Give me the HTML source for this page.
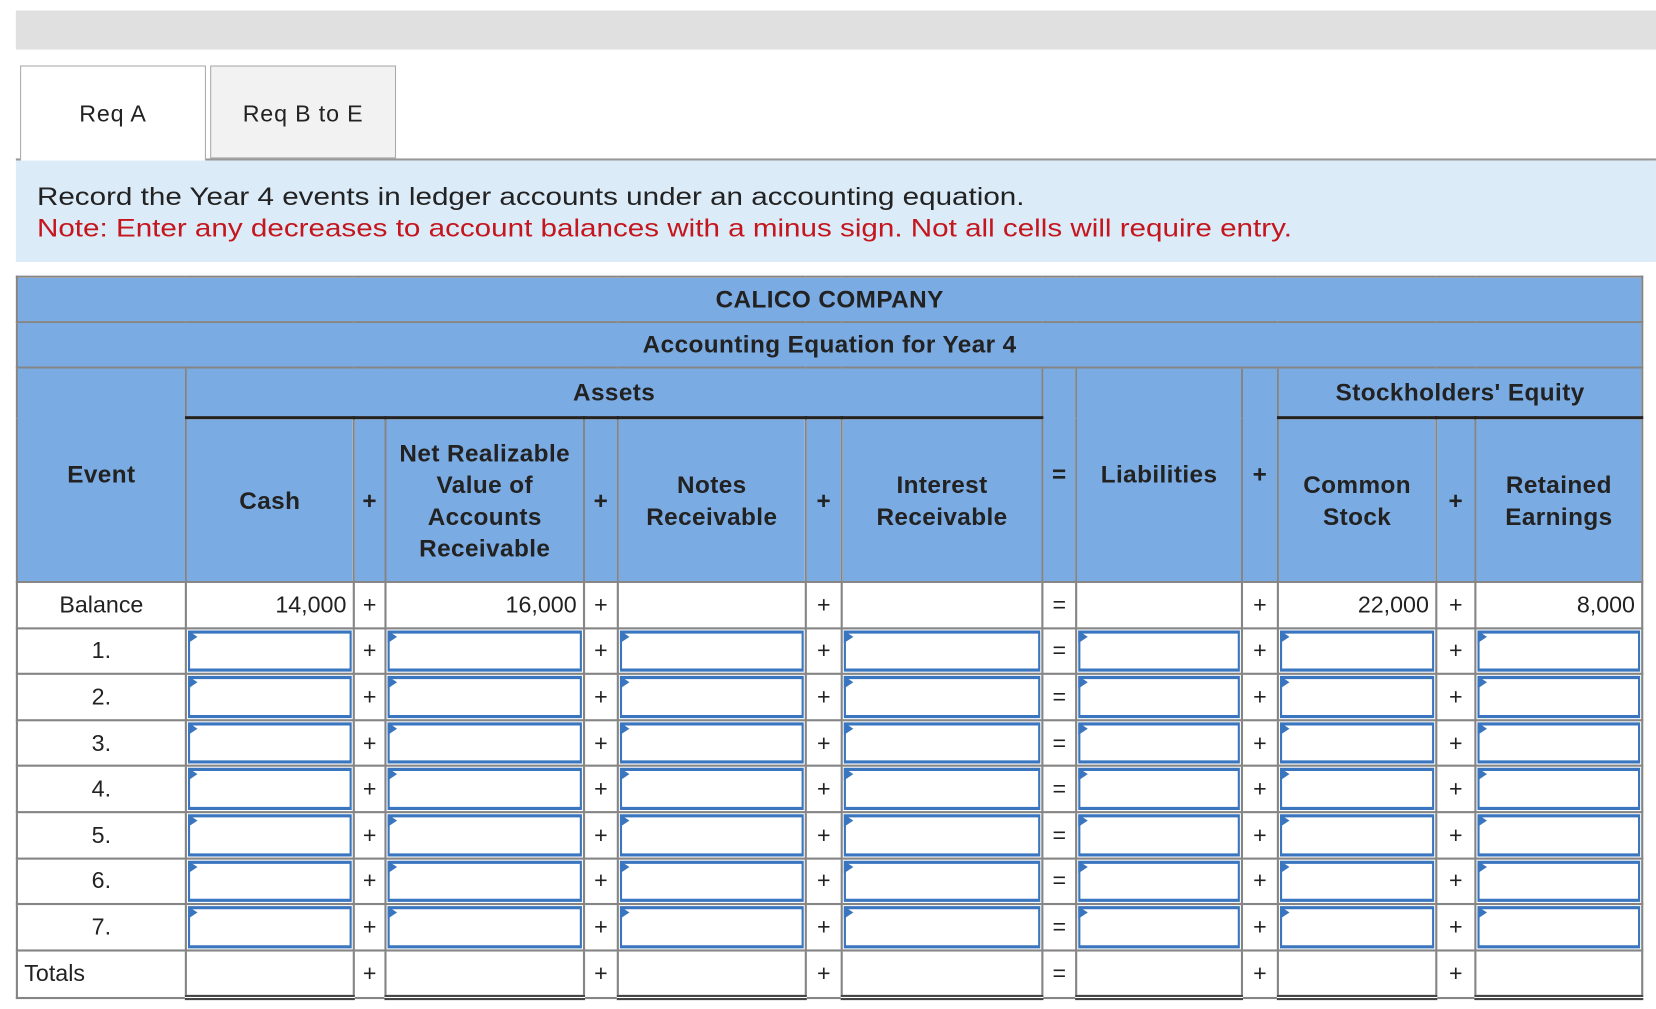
<!DOCTYPE html>
<html><head><meta charset="utf-8"><style>
html,body{margin:0;padding:0;background:#fff;overflow:hidden;width:1656px;height:1008px}
#w{position:absolute;left:0;top:0;width:1568px;height:955px;transform:scale(1.0561);transform-origin:0 0;font-family:"Liberation Sans",Arial,sans-serif;color:#222}
.bar{position:absolute;left:15px;top:10px;width:1553px;height:37px;background:#e0e0e0}
.tab{position:absolute;top:62px;height:88px;box-sizing:border-box;border:1px solid #aaa;font-size:22px;text-align:center;line-height:90px;letter-spacing:0.8px}
.line{position:absolute;left:15px;top:150px;width:1553px;height:2px;background:#999}
.info{position:absolute;left:15px;top:152px;width:1553px;height:96px;background:#dcebf8;font-size:24px}
.info div{position:absolute;left:20px;white-space:nowrap;transform-origin:0 0;transform:scaleX(1.168)}
table{position:absolute;left:15px;top:261px;border-collapse:collapse;table-layout:fixed;width:1539px}
td{border:2px solid #858585;padding:0;font-size:22px;text-align:center;position:relative}
.h td{background:#7aabe2;font-weight:bold;color:#222;letter-spacing:0.4px;font-size:23px}
.r td{height:41.6px}
.num{text-align:right;padding-right:6px}
.in{position:absolute;left:1px;right:1px;top:1px;bottom:1px;border:2px solid #3a76bf;border-top-width:3px;border-bottom-width:3px}
.in:before{content:"";position:absolute;left:-2px;top:-3px;border-left:9px solid #3a76bf;border-top:6px solid transparent;border-bottom:6px solid transparent}
.tot td.v{border-bottom:5px double #444}
</style></head><body><div id="w">
<div class="bar"></div>
<div class="tab" style="left:19px;width:176px;background:#fff;border-bottom:none;height:90px;z-index:2">Req A</div>
<div class="tab" style="left:199px;width:176px;background:#f2f2f2">Req B to E</div>
<div class="line"></div>
<div class="info"><div style="top:21px">Record the Year 4 events in ledger accounts under an accounting equation.</div><div style="top:51px;color:#c4161c">Note: Enter any decreases to account balances with a minus sign. Not all cells will require entry.</div></div>
<table>
<colgroup><col style="width:160px"><col style="width:159px"><col style="width:30px"><col style="width:188px"><col style="width:32px"><col style="width:178px"><col style="width:34px"><col style="width:190px"><col style="width:32px"><col style="width:157px"><col style="width:34px"><col style="width:150px"><col style="width:37px"><col style="width:158px"></colgroup>
<tr class="h"><td colspan="14" style="height:41px">CALICO COMPANY</td></tr>
<tr class="h"><td colspan="14" style="height:41px">Accounting Equation for Year 4</td></tr>
<tr class="h"><td rowspan="2">Event</td><td colspan="7" style="height:45px;border-bottom:3px solid #222">Assets</td><td rowspan="2">=</td><td rowspan="2">Liabilities</td><td rowspan="2">+</td><td colspan="3" style="border-bottom:3px solid #222">Stockholders' Equity</td></tr>
<tr class="h" style="line-height:30px"><td style="height:153px">Cash</td><td>+</td><td>Net Realizable Value of Accounts Receivable</td><td>+</td><td>Notes<br>Receivable</td><td>+</td><td>Interest<br>Receivable</td><td>Common<br>Stock</td><td>+</td><td>Retained<br>Earnings</td></tr>
<tr class="r"><td>Balance</td><td class="num">14,000</td><td>+</td><td class="num">16,000</td><td>+</td><td></td><td>+</td><td></td><td>=</td><td></td><td>+</td><td class="num">22,000</td><td>+</td><td class="num">8,000</td></tr>
<tr class="r"><td>1.</td><td><div class="in"></div></td><td>+</td><td><div class="in"></div></td><td>+</td><td><div class="in"></div></td><td>+</td><td><div class="in"></div></td><td>=</td><td><div class="in"></div></td><td>+</td><td><div class="in"></div></td><td>+</td><td><div class="in"></div></td></tr>
<tr class="r"><td>2.</td><td><div class="in"></div></td><td>+</td><td><div class="in"></div></td><td>+</td><td><div class="in"></div></td><td>+</td><td><div class="in"></div></td><td>=</td><td><div class="in"></div></td><td>+</td><td><div class="in"></div></td><td>+</td><td><div class="in"></div></td></tr>
<tr class="r"><td>3.</td><td><div class="in"></div></td><td>+</td><td><div class="in"></div></td><td>+</td><td><div class="in"></div></td><td>+</td><td><div class="in"></div></td><td>=</td><td><div class="in"></div></td><td>+</td><td><div class="in"></div></td><td>+</td><td><div class="in"></div></td></tr>
<tr class="r"><td>4.</td><td><div class="in"></div></td><td>+</td><td><div class="in"></div></td><td>+</td><td><div class="in"></div></td><td>+</td><td><div class="in"></div></td><td>=</td><td><div class="in"></div></td><td>+</td><td><div class="in"></div></td><td>+</td><td><div class="in"></div></td></tr>
<tr class="r"><td>5.</td><td><div class="in"></div></td><td>+</td><td><div class="in"></div></td><td>+</td><td><div class="in"></div></td><td>+</td><td><div class="in"></div></td><td>=</td><td><div class="in"></div></td><td>+</td><td><div class="in"></div></td><td>+</td><td><div class="in"></div></td></tr>
<tr class="r"><td>6.</td><td><div class="in"></div></td><td>+</td><td><div class="in"></div></td><td>+</td><td><div class="in"></div></td><td>+</td><td><div class="in"></div></td><td>=</td><td><div class="in"></div></td><td>+</td><td><div class="in"></div></td><td>+</td><td><div class="in"></div></td></tr>
<tr class="r"><td>7.</td><td><div class="in"></div></td><td>+</td><td><div class="in"></div></td><td>+</td><td><div class="in"></div></td><td>+</td><td><div class="in"></div></td><td>=</td><td><div class="in"></div></td><td>+</td><td><div class="in"></div></td><td>+</td><td><div class="in"></div></td></tr>
<tr class="r tot"><td style="text-align:left;padding-left:6px">Totals</td><td class="v"></td><td>+</td><td class="v"></td><td>+</td><td class="v"></td><td>+</td><td class="v"></td><td>=</td><td class="v"></td><td>+</td><td class="v"></td><td>+</td><td class="v"></td></tr>
</table>
</div></body></html>
